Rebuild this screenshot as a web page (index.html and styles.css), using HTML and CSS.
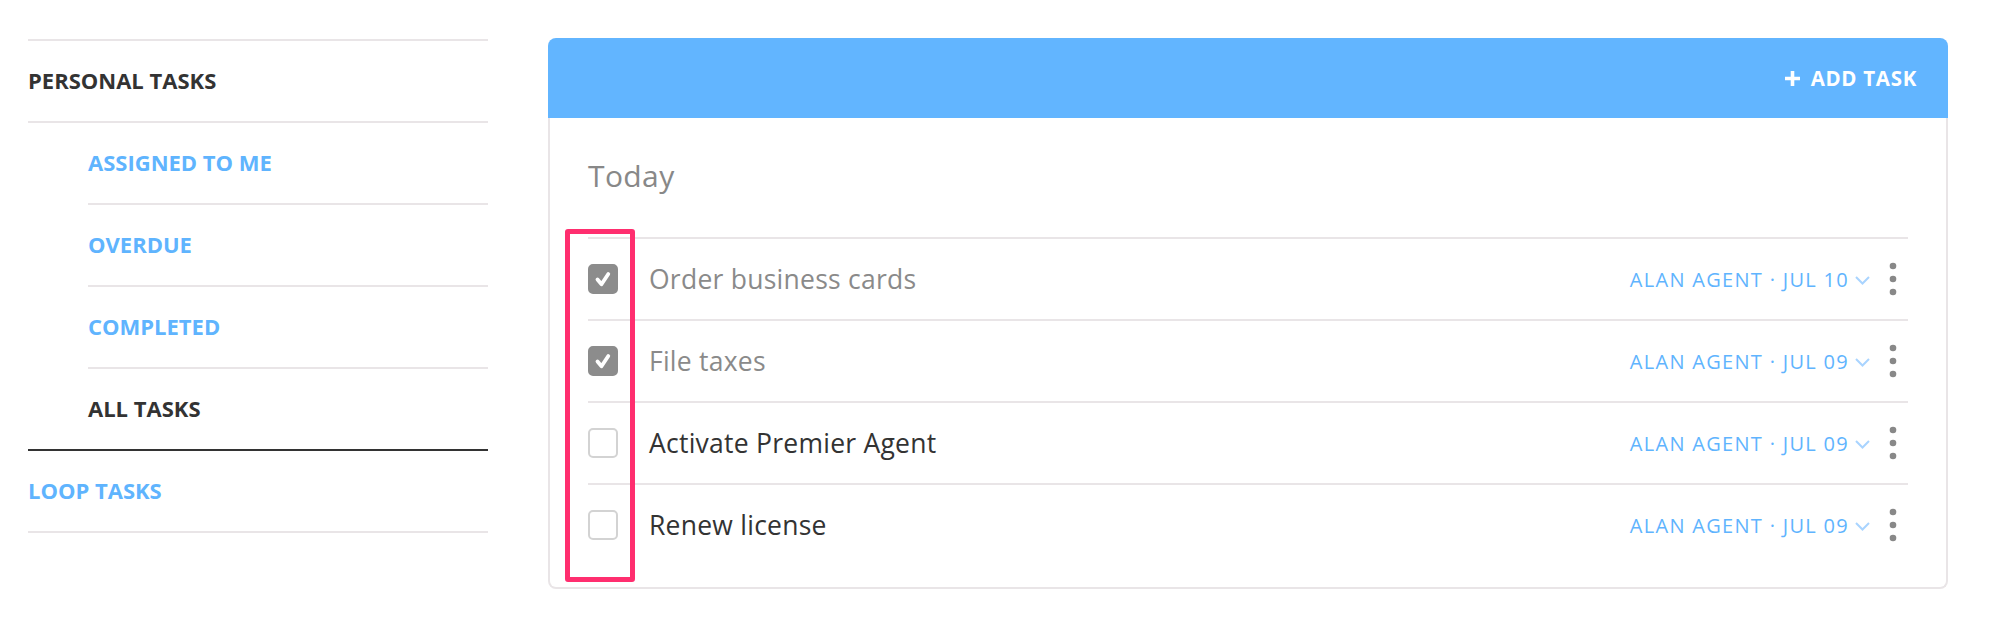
FILE: index.html
```html
<!DOCTYPE html>
<html lang="en">
<head>
<meta charset="utf-8">
<title>Tasks</title>
<link rel="stylesheet" href="styles.css">
</head>
<body>
<div class="page">
  <nav class="sidebar">
    <div class="nav-item nav-dark">Personal Tasks</div>
    <div class="subnav">
      <div class="nav-item nav-blue">Assigned to me</div>
      <div class="nav-item nav-blue">Overdue</div>
      <div class="nav-item nav-blue">Completed</div>
      <div class="nav-item nav-dark">All Tasks</div>
    </div>
    <div class="nav-item nav-blue">Loop Tasks</div>
  </nav>

  <section class="card">
    <header class="card-header">
      <button class="add-btn">
        <svg class="plus" width="15" height="15" viewBox="0 0 15 15"><path d="M7.5 0v15M0 7.5h15" stroke="#fff" stroke-width="3.6"/></svg>
        <span>Add Task</span>
      </button>
    </header>
    <div class="card-body">
      <h2 class="group-title">Today</h2>
      <div class="task-list">
        <div class="task done">
          <span class="check checked"><svg width="30" height="30" viewBox="0 0 30 30"><path d="M9.5 15.5l4 4.8 6.8-10.3" fill="none" stroke="#fff" stroke-width="3.8" stroke-linecap="round" stroke-linejoin="round"/></svg></span>
          <span class="task-name">Order business cards</span>
          <span class="meta">ALAN AGENT · JUL 10</span>
          <svg class="chev" width="15" height="9" viewBox="0 0 15 9"><path d="M1 1l6.5 6.5L14 1" fill="none" stroke="#a9d4ff" stroke-width="2"/></svg>
          <svg class="dots" width="8" height="34" viewBox="0 0 8 34"><circle cx="4" cy="4" r="3.3" fill="#888"/><circle cx="4" cy="17" r="3.3" fill="#888"/><circle cx="4" cy="30" r="3.3" fill="#888"/></svg>
        </div>
        <div class="task done">
          <span class="check checked"><svg width="30" height="30" viewBox="0 0 30 30"><path d="M9.5 15.5l4 4.8 6.8-10.3" fill="none" stroke="#fff" stroke-width="3.8" stroke-linecap="round" stroke-linejoin="round"/></svg></span>
          <span class="task-name">File taxes</span>
          <span class="meta">ALAN AGENT · JUL 09</span>
          <svg class="chev" width="15" height="9" viewBox="0 0 15 9"><path d="M1 1l6.5 6.5L14 1" fill="none" stroke="#a9d4ff" stroke-width="2"/></svg>
          <svg class="dots" width="8" height="34" viewBox="0 0 8 34"><circle cx="4" cy="4" r="3.3" fill="#888"/><circle cx="4" cy="17" r="3.3" fill="#888"/><circle cx="4" cy="30" r="3.3" fill="#888"/></svg>
        </div>
        <div class="task">
          <span class="check"></span>
          <span class="task-name">Activate Premier Agent</span>
          <span class="meta">ALAN AGENT · JUL 09</span>
          <svg class="chev" width="15" height="9" viewBox="0 0 15 9"><path d="M1 1l6.5 6.5L14 1" fill="none" stroke="#a9d4ff" stroke-width="2"/></svg>
          <svg class="dots" width="8" height="34" viewBox="0 0 8 34"><circle cx="4" cy="4" r="3.3" fill="#888"/><circle cx="4" cy="17" r="3.3" fill="#888"/><circle cx="4" cy="30" r="3.3" fill="#888"/></svg>
        </div>
        <div class="task">
          <span class="check"></span>
          <span class="task-name">Renew license</span>
          <span class="meta">ALAN AGENT · JUL 09</span>
          <svg class="chev" width="15" height="9" viewBox="0 0 15 9"><path d="M1 1l6.5 6.5L14 1" fill="none" stroke="#a9d4ff" stroke-width="2"/></svg>
          <svg class="dots" width="8" height="34" viewBox="0 0 8 34"><circle cx="4" cy="4" r="3.3" fill="#888"/><circle cx="4" cy="17" r="3.3" fill="#888"/><circle cx="4" cy="30" r="3.3" fill="#888"/></svg>
        </div>
        <div class="highlight"></div>
      </div>
    </div>
  </section>
</div>
</body>
</html>
```
FILE: styles.css
```css
* { box-sizing: border-box; }
html, body { margin: 0; background: #fff; }
body { font-family: "Open Sans", "DejaVu Sans", sans-serif; color: #333; }

.page {
  display: flex;
  align-items: flex-start;
  gap: 60px;
  padding: 38px 0 0 28px;
}

.sidebar {
  width: 460px;
  margin-top: 1px;
  border-top: 2px solid #e9e5e7;
}
.nav-item {
  height: 82px;
  display: flex;
  align-items: center;
  padding-bottom: 3px;
  border-bottom: 2px solid #e9e5e7;
  font-size: 22px;
  font-weight: 700;
  text-transform: uppercase;
}
.nav-dark { color: #333; }
.nav-blue { color: #5fb4fe; }
.subnav {
  padding-left: 60px;
  border-bottom: 2px solid #333;
}
.subnav .nav-item:last-child { border-bottom: none; height: 80px; }

.card { width: 1400px; }
.card-header {
  height: 80px;
  background: #62b5ff;
  border-radius: 8px 8px 0 0;
  display: flex;
  align-items: center;
  justify-content: flex-end;
  padding-right: 31px;
}
.add-btn {
  display: flex;
  align-items: center;
  gap: 11px;
  background: none;
  border: 0;
  padding: 0;
  color: #fff;
  font-family: inherit;
  font-size: 20.5px;
  font-weight: 700;
  letter-spacing: 0.7px;
  text-transform: uppercase;
}
.card-body {
  border: 2px solid #e9e5e7;
  border-top: none;
  border-radius: 0 0 8px 8px;
  padding: 38px 38px 22px;
}
.group-title {
  margin: 0 0 41px;
  font-size: 30px;
  line-height: 40px;
  font-weight: 400;
  letter-spacing: 0.4px;
  color: #888;
}
.task-list { position: relative; }
.task {
  height: 82px;
  display: flex;
  align-items: center;
  border-top: 2px solid #e9e5e7;
}
.check {
  width: 30px;
  height: 30px;
  border: 2px solid #d3d3d3;
  border-radius: 5px;
  flex: none;
  display: flex;
}
.check.checked { background: #8c8c8c; border-color: #8c8c8c; }
.check svg { margin: -2px; }
.task-name {
  margin-left: 31px;
  font-size: 26.5px;
  letter-spacing: 0.25px;
  color: #333;
  flex: 1;
}
.task.done .task-name { color: #8a8a8a; }
.meta {
  font-size: 20px;
  color: #5fb4fe;
  letter-spacing: 1.3px;
}
.chev { margin-left: 6px; margin-top: 2px; }
.dots { margin-left: 19px; margin-right: 11px; }

.highlight {
  position: absolute;
  left: -23px;
  top: -8px;
  width: 70px;
  height: 353px;
  border: 5px solid #ff2e6f;
  border-radius: 3px;
}
```
